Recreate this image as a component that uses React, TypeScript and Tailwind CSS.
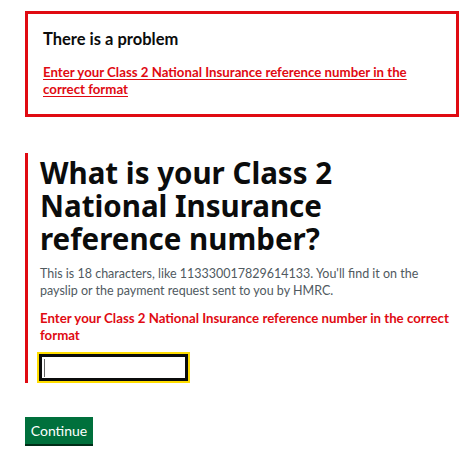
import React from "react";

export default function App() {
  return (
    <div
      className="min-h-[449px] w-[474px] bg-white pl-[25px] pr-[15px] pt-[11px] text-[#0b0c0c]"
      style={{ fontFamily: 'Lato, "Noto Sans", Arial, sans-serif' }}
    >
      <div className="w-[434px] border-[3px] border-[#e00a12] px-[15px] pb-[17px] pt-[15px]">
        <h2 className="text-[16.5px] font-bold leading-[20px]">There is a problem</h2>
        <a
          href="#"
          className="mt-[15px] block text-[13.25px] font-bold leading-[16.5px] text-[#e00a12] underline underline-offset-2"
        >
          Enter your Class 2 National Insurance reference number in the correct format
        </a>
      </div>

      <div className="mt-[36px] border-l-[3px] border-[#e00a12] pl-[12px] pt-[3px]">
        <h1
          className="w-[312px] text-[29.5px] font-bold leading-[33px]"
          style={{ fontFamily: '"Noto Sans", Arial, sans-serif' }}
        >
          What is your Class 2 National Insurance reference number?
        </h1>
        <p className="mt-[10px] text-[12.5px] leading-[17px] text-[#505a5f]">
          This is 18 characters, like 113330017829614133. You'll find it on the payslip or the payment request sent to you by HMRC.
        </p>
        <p className="mt-[11px] text-[13.25px] font-bold leading-[17px] text-[#e00a12]">
          Enter your Class 2 National Insurance reference number in the correct format
        </p>
        <div className="mt-[8px] ml-[-3px] w-[153px] border-[2px] border-[#ffdd00]">
          <div className="flex h-[27px] items-center border-[3px] border-[#0b0c0c] bg-white pl-[2px]">
            <div className="h-[18px] w-[1px] bg-[#666]" />
          </div>
        </div>
      </div>

      <button className="mt-[34px] h-[27px] w-[68px] bg-[#00703c] text-[14px] leading-[20px] text-white shadow-[0_2px_0_#002d18]">
        Continue
      </button>
    </div>
  );
}
